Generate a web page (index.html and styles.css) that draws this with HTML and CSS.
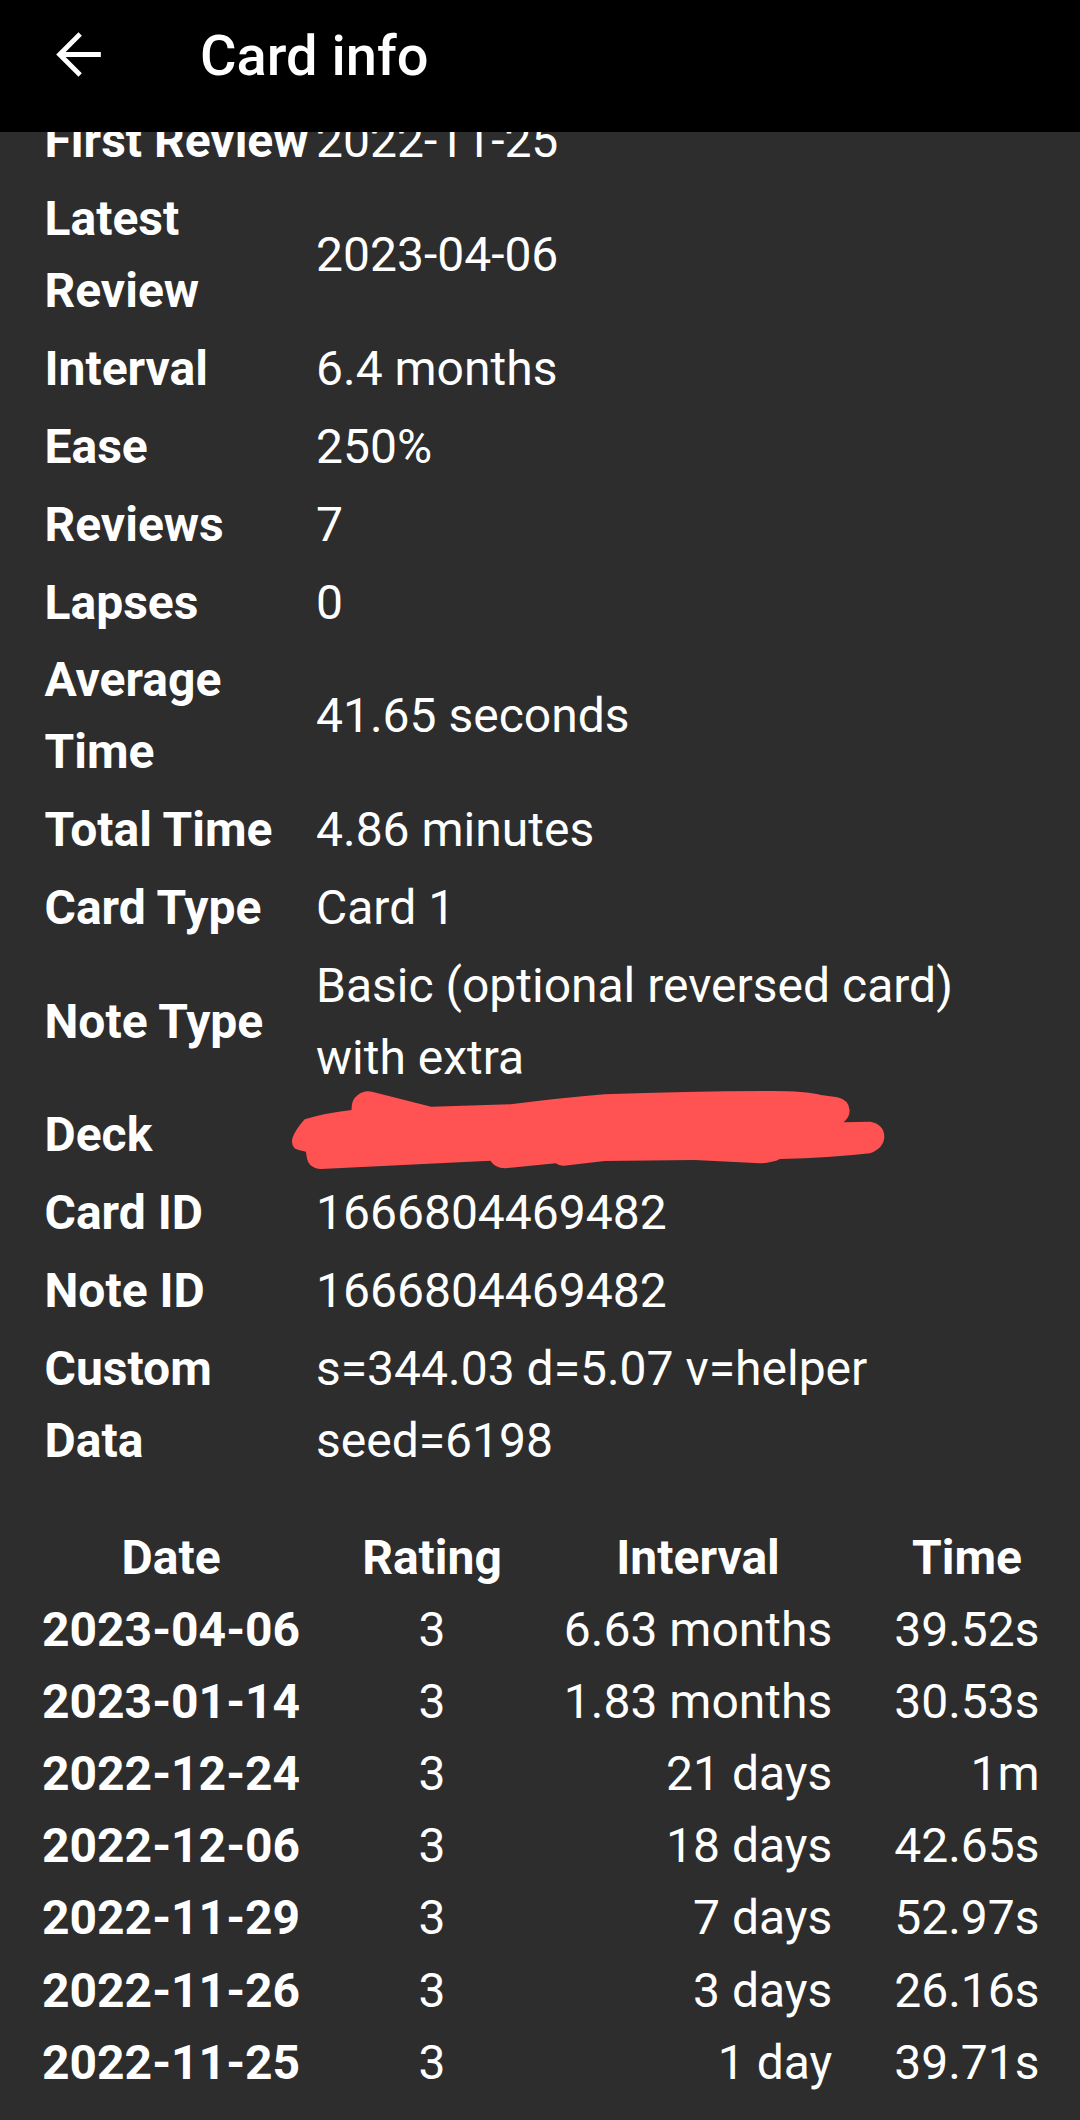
FILE: index.html
```html
<!DOCTYPE html>
<html lang="en">
<head>
<meta charset="utf-8">
<title>Card info</title>
<link rel="stylesheet" href="styles.css">
</head>
<body>
<div class="page">
  <header class="appbar">
    <svg class="back" viewBox="0 0 24 24" aria-hidden="true"><path d="M20 11.1H7.4l5.8-5.8L12 4l-8 8 8 8 1.2-1.3-5.8-5.8H20z"/></svg>
    <h1 class="title">Card info</h1>
  </header>
  <main class="scroll">
    <table class="info">
      <colgroup><col class="col-label"><col class="col-value"></colgroup>
      <tbody>
        <tr><th>First Review</th><td>2022-11-25</td></tr>
        <tr><th>Latest Review</th><td>2023-04-06</td></tr>
        <tr><th>Interval</th><td>6.4 months</td></tr>
        <tr><th>Ease</th><td>250%</td></tr>
        <tr><th>Reviews</th><td>7</td></tr>
        <tr><th>Lapses</th><td>0</td></tr>
        <tr class="tight"><th>Average Time</th><td>41.65 seconds</td></tr>
        <tr><th>Total Time</th><td>4.86 minutes</td></tr>
        <tr><th>Card Type</th><td>Card 1</td></tr>
        <tr><th>Note Type</th><td>Basic (optional reversed card) with extra</td></tr>
        <tr class="tight"><th>Deck</th><td></td></tr>
        <tr><th>Card ID</th><td>1666804469482</td></tr>
        <tr><th>Note ID</th><td>1666804469482</td></tr>
        <tr><th>Custom Data</th><td>s=344.03 d=5.07 v=helper seed=6198</td></tr>
      </tbody>
    </table>
    <table class="log">
      <thead>
        <tr><th>Date</th><th>Rating</th><th>Interval</th><th>Time</th></tr>
      </thead>
      <tbody>
        <tr><th>2023-04-06</th><td class="rating">3</td><td>6.63 months</td><td>39.52s</td></tr>
        <tr><th>2023-01-14</th><td class="rating">3</td><td>1.83 months</td><td>30.53s</td></tr>
        <tr><th>2022-12-24</th><td class="rating">3</td><td>21 days</td><td>1m</td></tr>
        <tr><th>2022-12-06</th><td class="rating">3</td><td>18 days</td><td>42.65s</td></tr>
        <tr><th>2022-11-29</th><td class="rating">3</td><td>7 days</td><td>52.97s</td></tr>
        <tr><th>2022-11-26</th><td class="rating">3</td><td>3 days</td><td>26.16s</td></tr>
        <tr><th>2022-11-25</th><td class="rating">3</td><td>1 day</td><td>39.71s</td></tr>
      </tbody>
    </table>
  </main>
  <svg class="scribble" viewBox="0 0 1080 2120" aria-hidden="true"><path d="M292.4 1138.3Q295 1130 304.7 1119.3Q325 1113 351.6 1110Q351 1100 357.8 1095Q364 1090 372 1091.7L431.2 1106.7L510.8 1104.3Q560 1098 604.7 1094.3Q690 1091 772 1091Q805 1091 821 1095L837.3 1097.3Q849 1100 849.6 1110Q850 1117 843.5 1122.3L870 1121.7Q884 1124 884.3 1136.7Q884 1148 870 1153.3Q830 1158 780 1159Q772 1163 759.8 1163.3L694.5 1160L604.7 1161L563.9 1165.7Q559 1166 555.7 1163.3L504.7 1168.3Q495 1168 490.4 1160.7L321 1169Q308 1168 306.7 1156.7L305.9 1151.7Q297 1150 294.5 1148.3Q291 1145 292.4 1138.3Z"/></svg>
</div>
</body>
</html>
```

FILE: styles.css
```css
* { box-sizing: border-box; }
html, body { margin: 0; padding: 0; background: #2d2d2d; }
body {
  color: #fff;
  font-family: Roboto, "Liberation Sans", sans-serif;
  font-size: 48px;
  line-height: 72px;
}
.page {
  position: relative;
  display: flex;
  flex-direction: column;
  width: 1080px;
  height: 2120px;
  overflow: hidden;
}
.appbar {
  position: relative;
  z-index: 1;
  flex: none;
  display: flex;
  align-items: flex-start;
  height: 132px;
  padding: 21px 0 0 45px;
  background: #000;
}
.back { flex: none; width: 67px; height: 67px; fill: #fff; }
.title {
  margin: 0 0 0 88px;
  font-size: 56px;
  font-weight: 500;
  line-height: 70px;
}
.scroll { flex: 1; min-height: 0; }
table { border-collapse: collapse; border-spacing: 0; }
th { font-weight: 700; }
.info {
  table-layout: fixed;
  width: 991px;
  margin: -30px 0 42px 44.5px;
}
.col-label { width: 271.5px; }
.col-value { width: 719.5px; }
.info th, .info td { padding: 3px 0; text-align: left; vertical-align: middle; }
.info .tight th, .info .tight td { padding-top: 2px; }
.log { margin-left: 11px; line-height: 72.1px; }
.log th, .log td { padding: 0 31px; text-align: right; }
.log th { text-align: center; }
.log .rating { text-align: center; }
.scribble {
  position: absolute;
  left: 0;
  top: 0;
  width: 1080px;
  height: 2120px;
  fill: #ff5252;
}
```
